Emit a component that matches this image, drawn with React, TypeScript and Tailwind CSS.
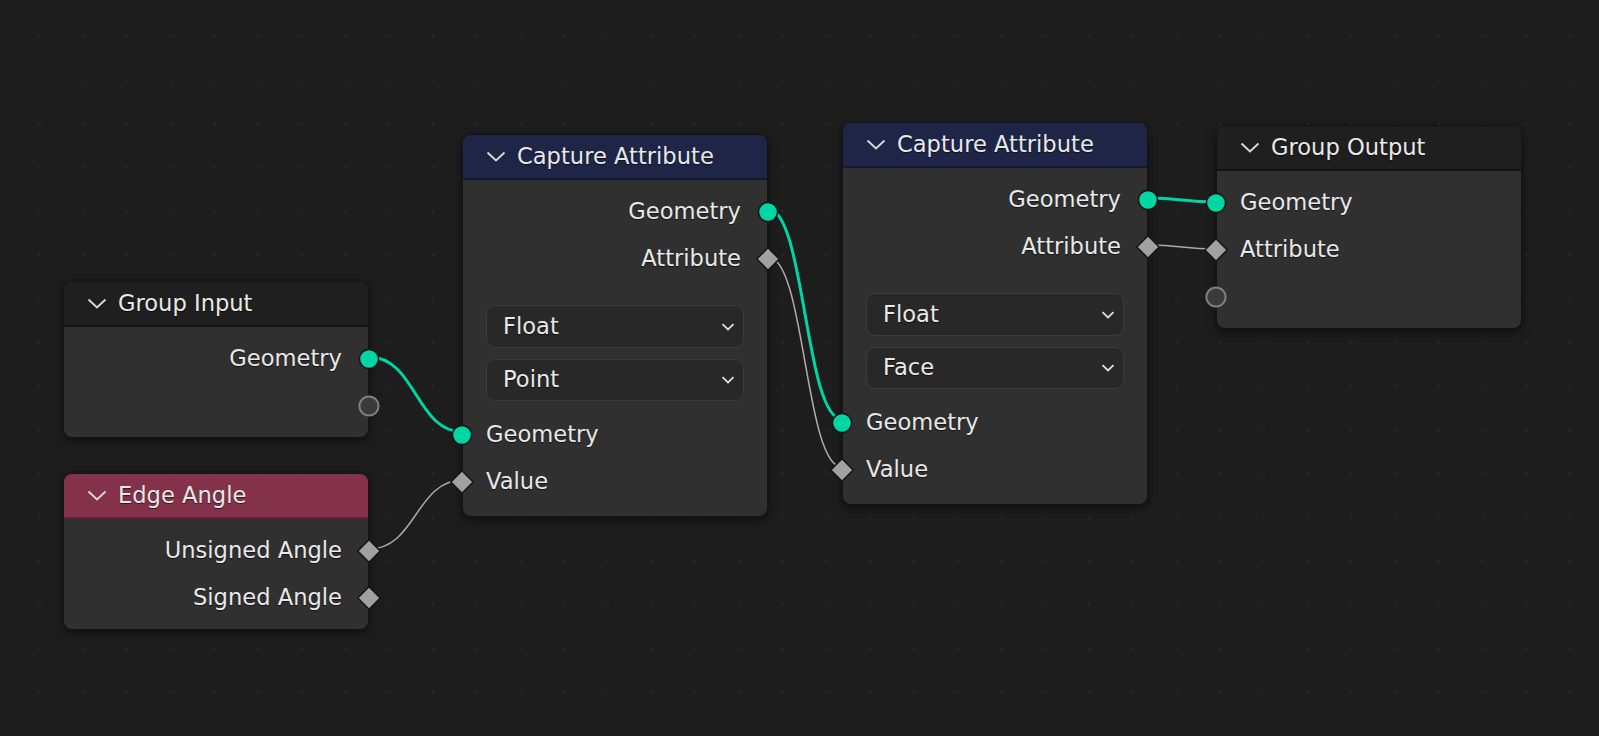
import type { ReactNode } from "react";

// Blender geometry-nodes canvas: nodes sit at their canvas coordinates,
// links are cubic beziers with horizontal handles drawn underneath.

type SocketKind = "geo" | "float" | "empty";

function Socket({ kind, side }: { kind: SocketKind; side: "left" | "right" }) {
  const pos = side === "left" ? "left-[-13px]" : "right-[-13px]";
  return (
    <div className={`absolute top-1/2 -translate-y-1/2 ${pos}`}>
      <svg width="24" height="24" viewBox="0 0 24 24">
        {kind === "geo" && <circle cx="12" cy="12" r="9.6" fill="#00d6a3" stroke="#161616" strokeWidth="1.6" />}
        {kind === "float" && (
          <polygon points="12,0.8 23.2,12 12,23.2 0.8,12" fill="#a1a1a1" stroke="#161616" strokeWidth="1.6" />
        )}
        {kind === "empty" && <circle cx="12" cy="12" r="9.6" fill="#3a3a3a" stroke="#808080" strokeWidth="2" />}
      </svg>
    </div>
  );
}

function Row({ label, kind, side }: { label?: string; kind: SocketKind; side: "left" | "right" }) {
  return (
    <div
      className={`relative flex h-[47px] items-center ${
        side === "right" ? "justify-end pr-[26px]" : "justify-start pl-[23px]"
      }`}
    >
      {label && <span>{label}</span>}
      <Socket kind={kind} side={side} />
    </div>
  );
}

function Dropdown({ label, className = "" }: { label: string; className?: string }) {
  return (
    <div
      className={`mx-[23px] flex items-center justify-between rounded-[9px] border border-[#3b3b3b] bg-[#282828] pl-4 pr-[8px] ${className}`}
    >
      <span>{label}</span>
      <svg width="14" height="8" viewBox="0 0 14 8">
        <polyline points="1.5,1.2 7,6.5 12.5,1.2" fill="none" stroke="#e0e0e0" strokeWidth="1.8" />
      </svg>
    </div>
  );
}

function Node({
  title,
  header,
  className,
  children,
}: {
  title: string;
  header: string;
  className: string;
  children: ReactNode;
}) {
  return (
    <div
      className={`absolute w-[306px] rounded-[9px] border border-[#141414] bg-[#303030] shadow-[0_3px_8px_rgba(0,0,0,0.55)] ${className}`}
    >
      <div className={`flex h-[45px] items-center gap-[11px] rounded-t-[8px] border-b-2 border-black/30 pl-[23px] ${header}`}>
        <svg width="20" height="11" viewBox="0 0 20 11">
          <polyline points="1.5,1.5 10,9.5 18.5,1.5" fill="none" stroke="#d8d8d8" strokeWidth="1.9" />
        </svg>
        <span>{title}</span>
      </div>
      {children}
    </div>
  );
}

function link(x1: number, y1: number, x2: number, y2: number) {
  const h = (x2 - x1) / 2;
  return `M${x1},${y1} C${x1 + h},${y1} ${x2 - h},${y2} ${x2},${y2}`;
}

export default function App() {
  return (
    <div className="relative h-[736px] w-[1599px] overflow-hidden bg-[#1d1d1d] font-['DejaVu_Sans',sans-serif] text-[22.6px] text-[#e8e8e8] [text-shadow:0_1px_1px_rgba(0,0,0,0.6)]">
      <svg className="absolute inset-0" width="1599" height="736">
        <defs>
          <pattern id="dots" x="38.4" y="35.4" width="43.73" height="43.73" patternUnits="userSpaceOnUse">
            <rect x="0" y="0" width="2" height="2" fill="#2a2a2a" />
          </pattern>
        </defs>
        <rect width="1599" height="736" fill="url(#dots)" />
        <g fill="none" strokeLinecap="round">
          <path d={link(369, 357, 463, 432)} stroke="#00d6a3" strokeWidth="3" />
          <path d={link(369, 549, 463, 480)} stroke="#ababab" strokeWidth="1.5" />
          <path d={link(768, 209, 842, 419)} stroke="#00d6a3" strokeWidth="3" />
          <path d={link(768, 257, 842, 467)} stroke="#ababab" strokeWidth="1.5" />
          <path d={link(1148, 198, 1216, 202)} stroke="#00d6a3" strokeWidth="3" />
          <path d={link(1148, 245, 1216, 249)} stroke="#ababab" strokeWidth="1.5" />
        </g>
      </svg>

      <Node title="Group Input" header="bg-[#1f1f1f]" className="left-[63px] top-[281px] pb-2">
        <div className="pt-2">
          <Row label="Geometry" kind="geo" side="right" />
          <Row kind="empty" side="right" />
        </div>
      </Node>

      <Node title="Edge Angle" header="bg-[#84314a]" className="left-[63px] top-[473px] pb-2">
        <div className="pt-2">
          <Row label="Unsigned Angle" kind="float" side="right" />
          <Row label="Signed Angle" kind="float" side="right" />
        </div>
      </Node>

      <Node title="Capture Attribute" header="bg-[#1e2547]" className="left-[462px] top-[134px] pb-[11px]">
        <div className="pt-2">
          <Row label="Geometry" kind="geo" side="right" />
          <Row label="Attribute" kind="float" side="right" />
        </div>
        <div className="mt-[23px] flex flex-col gap-[11px]">
          <Dropdown label="Float" className="h-[43px]" />
          <Dropdown label="Point" className="h-[42px]" />
        </div>
        <div className="mt-[10px]">
          <Row label="Geometry" kind="geo" side="left" />
          <Row label="Value" kind="float" side="left" />
        </div>
      </Node>

      <Node title="Capture Attribute" header="bg-[#1e2547]" className="left-[842px] top-[122px] pb-[11px]">
        <div className="pt-2">
          <Row label="Geometry" kind="geo" side="right" />
          <Row label="Attribute" kind="float" side="right" />
        </div>
        <div className="mt-[23px] flex flex-col gap-[11px]">
          <Dropdown label="Float" className="h-[43px]" />
          <Dropdown label="Face" className="h-[42px]" />
        </div>
        <div className="mt-[10px]">
          <Row label="Geometry" kind="geo" side="left" />
          <Row label="Value" kind="float" side="left" />
        </div>
      </Node>

      <Node title="Group Output" header="bg-[#1f1f1f]" className="left-[1216px] top-[125px] pb-2">
        <div className="pt-2">
          <Row label="Geometry" kind="geo" side="left" />
          <Row label="Attribute" kind="float" side="left" />
          <Row kind="empty" side="left" />
        </div>
      </Node>
    </div>
  );
}
